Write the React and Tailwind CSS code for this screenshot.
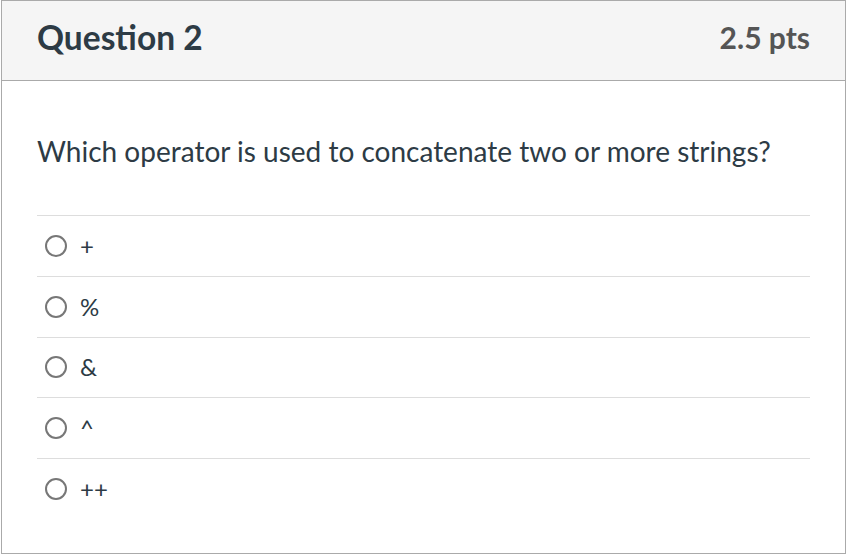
import React from 'react'

const options = ['+', '%', '&', '^', '++']

export default function App() {
  return (
    <div className="h-[556px] w-[849px] bg-white" style={{ fontFamily: 'Lato, "Noto Sans", sans-serif' }}>
      <div className="ml-px mr-[3px] flex h-[554px] flex-col border border-[#aaaaaa]">
        {/* Header */}
        <div className="flex h-[80px] items-center justify-between border-b border-[#aaaaaa] bg-[#f5f5f5] px-[35px] pb-[6px]">
          <h2 className="text-[33.5px] font-bold text-[#2d3b45]">Question 2</h2>
          <span className="text-[30px] font-bold text-[#555555]">2.5 pts</span>
        </div>

        {/* Body */}
        <div className="px-[35px] pt-[49px]">
          <p className="text-[28px] text-[#2d3b45]">Which operator is used to concatenate two or more strings?</p>
          <div className="mt-[43px] border-t border-[#dddddd]">
            {options.map((opt, i) => (
              <div
                key={i}
                className={`flex h-[60.75px] items-center gap-[13px] pl-[8px] ${i < options.length - 1 ? 'border-b border-[#dddddd]' : ''}`}
              >
                <span className="h-[22px] w-[22px] rounded-full border-2 border-[#777777]" />
                <span className="text-[24px] text-[#2d3b45]">{opt}</span>
              </div>
            ))}
          </div>
        </div>
      </div>
    </div>
  )
}
